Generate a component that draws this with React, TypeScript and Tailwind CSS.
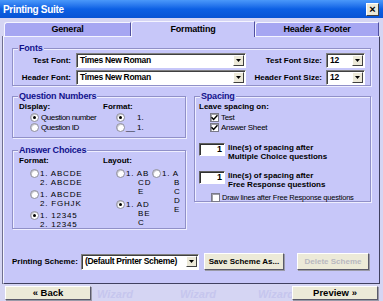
import { ReactNode } from 'react';

const FONT = '"Liberation Sans", Arial, sans-serif';

function GroupBox({ title, className, children }: { title: string; className?: string; children: ReactNode }) {
  return (
    <div
      className={`relative border border-[#9090c8] shadow-[inset_1px_1px_0_#eeeeff,1px_1px_0_#eeeeff] ${className ?? ''}`}
    >
      <span className="absolute left-[5px] top-[-7px] bg-[#c7c7f9] px-[1px] text-[9px] leading-[12px] font-bold tracking-[-0.2px] text-[#12128c]">
        {title}
      </span>
      {children}
    </div>
  );
}

function Radio({ checked }: { checked?: boolean }) {
  return (
    <span className="flex h-[9px] w-[9px] shrink-0 items-center justify-center rounded-full border border-[#8c8c9c] bg-white shadow-[inset_1px_1px_0_#c8c8d0]">
      {checked && <span className="h-[3px] w-[3px] rounded-full bg-black" />}
    </span>
  );
}

function Check({ checked }: { checked?: boolean }) {
  return (
    <span className="flex h-[9px] w-[9px] shrink-0 items-center justify-center border border-[#7a7a8a] bg-white shadow-[inset_1px_1px_0_#a0a0a8]">
      {checked && (
        <svg width="7" height="7" viewBox="0 0 7 7">
          <path d="M0.5 3.2 L2.6 5.4 L6.5 1.2" fill="none" stroke="#000" strokeWidth="1.5" />
        </svg>
      )}
    </span>
  );
}

function Combo({ value, className }: { value: string; className?: string }) {
  return (
    <div
      className={`flex h-[15px] items-center border border-t-[#808080] border-l-[#808080] border-b-white border-r-white bg-white shadow-[inset_1px_1px_0_#404040] ${className ?? ''}`}
    >
      <span className="flex-1 truncate pl-[3px] text-[8.5px] leading-[13px] font-bold tracking-[-0.3px] text-black">
        {value}
      </span>
      <span className="mr-[1px] flex h-[11px] w-[11px] items-center justify-center border border-t-white border-l-white border-b-[#404040] border-r-[#404040] bg-[#ece9d8]">
        <svg width="5" height="3" viewBox="0 0 5 3">
          <path d="M0 0 H5 L2.5 3 Z" fill="#000" />
        </svg>
      </span>
    </div>
  );
}

function NumBox({ value }: { value: string }) {
  return (
    <div className="flex h-[13px] w-[26px] shrink-0 items-center justify-end border border-t-[#606060] border-l-[#606060] border-b-white border-r-white bg-white pr-[2px] text-[9px] leading-[11px] font-bold text-black shadow-[inset_1px_1px_0_#303030]">
      {value}
    </div>
  );
}

function Button({ children, className, disabled }: { children: ReactNode; className?: string; disabled?: boolean }) {
  return (
    <div
      className={`flex items-center justify-center border border-t-white border-l-white border-b-[#5a5a6a] border-r-[#5a5a6a] bg-[#ecead8] shadow-[1px_1px_0_#9a9aa8] font-bold ${
        disabled ? 'text-[#b8b8c0]' : 'text-black'
      } ${className ?? ''}`}
    >
      {children}
    </div>
  );
}

function Lines({ lines }: { lines: string[] }) {
  return (
    <div className="flex flex-col text-[8px] leading-[9px] tracking-[0.8px] text-black">
      {lines.map((l, i) => (
        <span key={i} className="whitespace-pre">
          {l}
        </span>
      ))}
    </div>
  );
}

function Watermark({ x }: { x: string }) {
  return (
    <span className={`pointer-events-none absolute ${x} top-[2px] text-[11px] font-bold italic text-[#c6c6ee]`}>
      Wizard
    </span>
  );
}

export default function App() {
  return (
    <div className="relative h-[301px] w-[383px] overflow-hidden bg-[#d5d5f3] text-black" style={{ fontFamily: FONT }}>
      {/* title bar */}
      <div className="flex h-[18px] items-center justify-between bg-gradient-to-b from-[#4a98fa] via-[#0c60e4] to-[#0853d4] pl-[3px] pr-[4px]">
        <span className="text-[10px] font-bold tracking-[-0.3px] text-white">Printing Suite</span>
        <span className="flex h-[13px] w-[13px] items-center justify-center border border-t-white border-l-white border-b-[#404040] border-r-[#404040] bg-[#ece9d8] text-[11px] leading-none font-bold text-black">
          ×
        </span>
      </div>

      {/* tabs */}
      <div className="mt-[3px] flex h-[15px] items-end px-[4px] text-[9px] font-bold tracking-[-0.2px]">
        <div className="flex h-[14px] w-[127px] items-center justify-center rounded-tl-[3px] border border-b-0 border-[#f4f4ff] border-r-[#5050a0] bg-[#a6a6f2]">
          General
        </div>
        <div className="z-10 mb-[-1px] flex h-[16px] w-[124px] items-center justify-center rounded-tl-[3px] border border-b-0 border-[#f4f4ff] border-r-[#5050a0] bg-[#c7c7f9]">
          Formatting
        </div>
        <div className="flex h-[14px] flex-1 items-center justify-center rounded-tl-[3px] border border-b-0 border-[#f4f4ff] border-r-[#5050a0] bg-[#a6a6f2]">
          Header &amp; Footer
        </div>
      </div>

      {/* panel */}
      <div className="mx-[3px] h-[248px] border border-t-[#f4f4ff] border-l-[#f4f4ff] border-b-[#404060] border-r-[#404060] bg-[#c7c7f9] px-[8px] pt-[11px] shadow-[-1px_0_0_#707090]">
        {/* Fonts */}
        <GroupBox title="Fonts" className="h-[38px] pt-[4px] pr-[5px]">
          <div className="flex flex-col gap-[2px] text-[8px] font-bold">
            <div className="flex h-[15px] items-center">
              <span className="w-[58px] text-right">Test Font:</span>
              <Combo value="Times New Roman" className="ml-[5px] w-[170px]" />
              <span className="flex-1 text-right">Test Font Size:</span>
              <Combo value="12" className="ml-[4px] w-[39px]" />
            </div>
            <div className="flex h-[15px] items-center">
              <span className="w-[58px] text-right">Header Font:</span>
              <Combo value="Times New Roman" className="ml-[5px] w-[170px]" />
              <span className="flex-1 text-right">Header Font Size:</span>
              <Combo value="12" className="ml-[4px] w-[39px]" />
            </div>
          </div>
        </GroupBox>

        <div className="mt-[10px] flex gap-[8px]">
          <div className="flex w-[174px] flex-col gap-[12px]">
            {/* Question Numbers */}
            <GroupBox title="Question Numbers" className="h-[42px] pl-[6px] pt-[4px]">
              <div className="flex">
                <div className="w-[84px]">
                  <div className="text-[8px] leading-[11px] font-bold">Display:</div>
                  <div className="mt-[1px] flex flex-col gap-[1px] pl-[11px] text-[8px] leading-[9px] tracking-[-0.4px]">
                    <div className="flex items-center gap-[2px]">
                      <Radio checked />
                      <span>Question number</span>
                    </div>
                    <div className="flex items-center gap-[2px]">
                      <Radio />
                      <span>Question ID</span>
                    </div>
                  </div>
                </div>
                <div>
                  <div className="text-[8px] leading-[11px] font-bold">Format:</div>
                  <div className="mt-[1px] flex flex-col gap-[1px] pl-[13px] text-[8px] leading-[9px]">
                    <div className="flex items-center">
                      <Radio checked />
                      <span className="pl-[12px]">1.</span>
                    </div>
                    <div className="flex items-center">
                      <Radio />
                      <span className="whitespace-pre pl-[1px]">__ 1.</span>
                    </div>
                  </div>
                </div>
              </div>
            </GroupBox>

            {/* Answer Choices */}
            <GroupBox title="Answer Choices" className="h-[79px] pl-[6px] pt-[4px]">
              <div className="flex">
                <div className="w-[84px]">
                  <div className="text-[8px] leading-[11px] font-bold">Format:</div>
                  <div className="mt-[3px] flex flex-col gap-[3px] pl-[11px]">
                    <div className="flex items-start gap-[1px]">
                      <Radio />
                      <Lines lines={['1. ABCDE', '2. ABCDE']} />
                    </div>
                    <div className="flex items-start gap-[1px]">
                      <Radio />
                      <Lines lines={['1. ABCDE', '2. FGHJK']} />
                    </div>
                    <div className="flex items-start gap-[1px]">
                      <Radio checked />
                      <Lines lines={['1. 12345', '2. 12345']} />
                    </div>
                  </div>
                </div>
                <div>
                  <div className="text-[8px] leading-[11px] font-bold">Layout:</div>
                  <div className="mt-[3px] flex pl-[13px]">
                    <div className="flex w-[36px] flex-col gap-[4px]">
                      <div className="flex items-start gap-[1px]">
                        <Radio />
                        <Lines lines={['1. AB', '    CD', '    E']} />
                      </div>
                      <div className="flex items-start gap-[1px]">
                        <Radio checked />
                        <Lines lines={['1. AD', '    BE', '    C']} />
                      </div>
                    </div>
                    <div className="flex items-start gap-[1px]">
                      <Radio />
                      <Lines lines={['1. A', '    B', '    C', '    D', '    E']} />
                    </div>
                  </div>
                </div>
              </div>
            </GroupBox>
          </div>

          {/* Spacing */}
          <GroupBox title="Spacing" className="h-[106px] flex-1 pl-[4px] pt-[4px]">
            <div className="text-[8px] leading-[11px] font-bold">Leave spacing on:</div>
            <div className="mt-[1px] flex flex-col gap-[1px] pl-[11px] text-[8px] leading-[9px] tracking-[-0.3px]">
              <div className="flex items-center gap-[2px]">
                <Check checked />
                <span>Test</span>
              </div>
              <div className="flex items-center gap-[2px]">
                <Check checked />
                <span>Answer Sheet</span>
              </div>
            </div>
            <div className="mt-[11px] flex flex-col gap-[10px]">
              <div className="flex items-start gap-[3px]">
                <NumBox value="1" />
                <div className="text-[8px] leading-[9px] font-bold">
                  <div>line(s) of spacing after</div>
                  <div>Multiple Choice questions</div>
                </div>
              </div>
              <div className="flex items-start gap-[3px]">
                <NumBox value="1" />
                <div className="text-[8px] leading-[9px] font-bold">
                  <div>line(s) of spacing after</div>
                  <div>Free Response questions</div>
                </div>
              </div>
            </div>
            <div className="mt-[4px] flex items-center gap-[2px] pl-[12px] text-[7.5px] leading-[9px] tracking-[-0.2px]">
              <Check />
              <span>Draw lines after Free Response questions</span>
            </div>
          </GroupBox>
        </div>

        {/* Printing scheme */}
        <div className="mt-[24px] flex h-[17px] items-center">
          <span className="w-[69px] text-[8px] font-bold">Printing Scheme:</span>
          <Combo value="(Default Printer Scheme)" className="h-[16px] w-[118px]" />
          <Button className="ml-[5px] h-[17px] w-[80px] text-[8px]">Save Scheme As...</Button>
          <Button disabled className="ml-[13px] h-[17px] w-[72px] text-[8px]">
            Delete Scheme
          </Button>
        </div>
      </div>

      {/* wizard footer */}
      <div className="relative flex h-[17px] items-center justify-between px-[5px] pt-[1px]">
        <Watermark x="left-[97px]" />
        <Watermark x="left-[180px]" />
        <Watermark x="left-[258px]" />
        <Button className="relative h-[14px] w-[86px] text-[9.5px]">« Back</Button>
        <Button className="relative h-[14px] w-[86px] text-[9.5px]">Preview »</Button>
      </div>
    </div>
  );
}
